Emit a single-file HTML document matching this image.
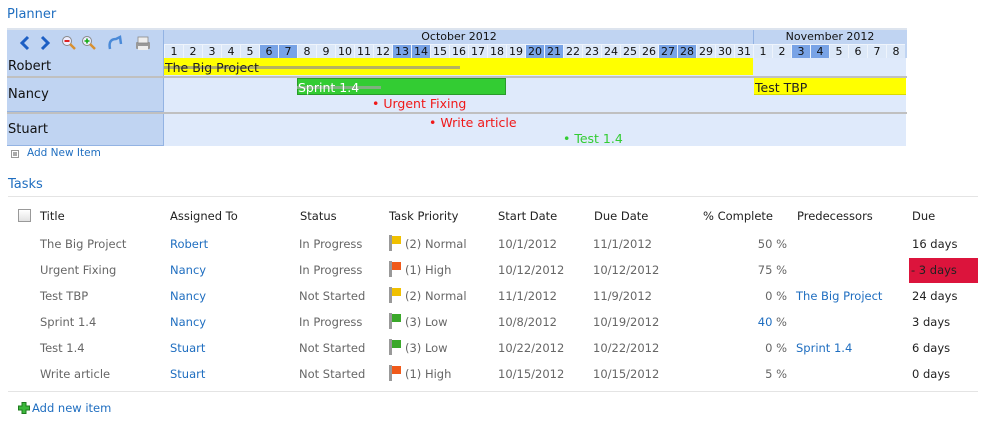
<!DOCTYPE html>
<html><head><meta charset="utf-8"><style>
*{margin:0;padding:0;box-sizing:border-box}
body{width:992px;height:431px;background:#fff;font-family:"DejaVu Sans","Liberation Sans",sans-serif;position:relative;overflow:hidden}
.a{position:absolute;white-space:nowrap}
.h{color:#1f6ec0;font-size:13px}
.days{position:absolute;left:164px;top:44px;height:14px;display:flex}
.days div{width:19px;height:14px;border-left:1px solid #eef4fc;border-top:1px solid #eef4fc;background:#dce8f8;font-size:11px;text-align:center;line-height:13px;color:#111}
.days div.w{background:#78a3e6}
.t{font-size:11.5px;color:#666}
.l{color:#1f6ec0}
.k{color:#222}
.hd{font-size:11.5px;color:#222;top:209px}
</style></head><body>
<div class="a h" style="left:7px;top:7px">Planner</div>
<div class="a" style="left:7px;top:28px;width:900px;height:2px;background:#dde4ee"></div>
<div class="a" style="left:7px;top:30px;width:900px;height:28px;background:#c0d4f2"></div>
<div class="a" style="left:163px;top:30px;width:1px;height:116px;background:#93b3e3"></div>
<div class="a" style="left:753px;top:30px;width:1px;height:14px;background:#93b3e3"></div>
<div class="a" style="left:164px;top:30px;width:590px;height:14px;font-size:11px;text-align:center;color:#111;line-height:14px">October 2012</div>
<div class="a" style="left:754px;top:30px;width:152px;height:14px;font-size:11px;text-align:center;color:#111;line-height:14px">November 2012</div>
<div class="days">
<div>1</div><div>2</div><div>3</div><div>4</div><div>5</div><div class="w">6</div><div class="w">7</div><div>8</div><div>9</div><div>10</div><div>11</div><div>12</div><div class="w">13</div><div class="w">14</div><div>15</div><div>16</div><div>17</div><div>18</div><div>19</div><div class="w">20</div><div class="w">21</div><div>22</div><div>23</div><div>24</div><div>25</div><div>26</div><div class="w">27</div><div class="w">28</div><div>29</div><div>30</div><div>31</div>
<div>1</div><div>2</div><div class="w">3</div><div class="w">4</div><div>5</div><div>6</div><div>7</div><div>8</div>
</div>
<svg class="a" style="left:18px;top:34px" width="140" height="18" viewBox="0 0 140 18">
<path d="M10 3 L4 9 L10 15" stroke="#1d5fc4" stroke-width="3" fill="none"/>
<path d="M24 3 L30 9 L24 15" stroke="#1d5fc4" stroke-width="3" fill="none"/>
<circle cx="49" cy="7" r="4.5" fill="#eef" stroke="#888"/><rect x="46.5" y="6" width="5" height="2" fill="#d22"/><path d="M52 10 L57 15" stroke="#d89030" stroke-width="2.5"/>
<circle cx="69" cy="7" r="4.5" fill="#eef" stroke="#888"/><path d="M66.5 7 H71.5 M69 4.5 V9.5" stroke="#1a1" stroke-width="1.6"/><path d="M72 10 L77 15" stroke="#d89030" stroke-width="2.5"/>
<path d="M92 15 Q90 5 98 5 L102 3 L103 10" stroke="#4a8ad8" stroke-width="2.5" fill="none"/>
<rect x="118" y="8" width="14" height="7" rx="1" fill="#999"/><rect x="120" y="3" width="10" height="6" fill="#eee" stroke="#888" stroke-width=".8"/><rect x="120" y="12" width="10" height="4" fill="#eee"/>
</svg>
<div class="a" style="left:7px;top:58px;width:156px;height:18px;background:#c0d4f2;font-size:13px;line-height:18px;padding-left:1px;color:#111">Robert</div>
<div class="a" style="left:164px;top:58px;width:742px;height:18px;background:#dfeafb"></div>
<div class="a" style="left:164px;top:58px;width:589px;height:17px;background:#ffff00"></div>
<div class="a" style="left:164px;top:66px;width:296px;height:3px;background:#b5b260"></div>
<div class="a" style="left:165px;top:59px;font-size:12.5px;color:#222;line-height:17px">The Big Project</div>
<div class="a" style="left:7px;top:76px;width:900px;height:2px;background:#c0c0c0"></div>
<div class="a" style="left:7px;top:78px;width:156px;height:34px;background:#c0d4f2;font-size:13px;line-height:34px;padding-left:1px;color:#111;border-bottom:1px solid #93b3e3">Nancy</div>
<div class="a" style="left:164px;top:78px;width:742px;height:34px;background:#dfeafb"></div>
<div class="a" style="left:297px;top:78px;width:209px;height:17px;background:#33cc33;border:1px solid #2a9a2a"></div>
<div class="a" style="left:297px;top:86px;width:84px;height:3px;background:#80b080"></div>
<div class="a" style="left:298px;top:79px;font-size:12.5px;color:#fff;line-height:17px">Sprint 1.4</div>
<div class="a" style="left:754px;top:78px;width:152px;height:17px;background:#ffff00;border-bottom:1px solid #dada00"></div>
<div class="a" style="left:755px;top:79px;font-size:12.5px;color:#222;line-height:17px">Test TBP</div>
<div class="a" style="left:372px;top:96px;font-size:12.5px;color:#f01818;line-height:16px">• Urgent Fixing</div>
<div class="a" style="left:7px;top:112px;width:900px;height:2px;background:#c0c0c0"></div>
<div class="a" style="left:7px;top:114px;width:156px;height:32px;background:#c0d4f2;font-size:13px;line-height:32px;padding-left:1px;color:#111;border-bottom:1px solid #93b3e3">Stuart</div>
<div class="a" style="left:164px;top:114px;width:742px;height:32px;background:#dfeafb"></div>
<div class="a" style="left:429px;top:115px;font-size:12.5px;color:#f01818;line-height:16px">• Write article</div>
<div class="a" style="left:563px;top:131px;font-size:12.5px;color:#33cc33;line-height:16px">• Test 1.4</div>
<div class="a" style="left:11px;top:150px;width:8px;height:8px;border:1px solid #999;background:#fff"><div style="margin:1px;width:4px;height:4px;background:#aaa"></div></div>
<div class="a l" style="left:27px;top:147px;font-size:10.5px">Add New Item</div>

<div class="a h" style="left:8px;top:177px">Tasks</div>
<div class="a" style="left:8px;top:196px;width:970px;height:1px;background:#e4e4e4"></div>
<div class="a" style="left:18px;top:209px;width:13px;height:13px;border:1px solid #999;background:linear-gradient(#fff,#e2e2e2)"></div>
<div class="a hd" style="left:40px">Title</div>
<div class="a hd" style="left:170px">Assigned To</div>
<div class="a hd" style="left:300px">Status</div>
<div class="a hd" style="left:389px">Task Priority</div>
<div class="a hd" style="left:498px">Start Date</div>
<div class="a hd" style="left:594px">Due Date</div>
<div class="a hd" style="left:703px">% Complete</div>
<div class="a hd" style="left:797px">Predecessors</div>
<div class="a hd" style="left:912px">Due</div>

<div class="a" style="left:909px;top:258px;width:69px;height:25px;background:#dc143c"></div>

<div class="a t" style="top:237px;left:40px">The Big Project</div><div class="a t l" style="top:237px;left:170px">Robert</div><div class="a t" style="top:237px;left:299px">In Progress</div><svg class="a" style="top:235px;left:389px" width="13" height="16"><rect x="0" y="0" width="3" height="16" fill="#999"/><path d="M3 1 H12 V9 H3 Z" fill="#f0c000"/></svg><div class="a t" style="top:237px;left:405px">(2) Normal</div><div class="a t" style="top:237px;left:498px">10/1/2012</div><div class="a t" style="top:237px;left:593px">11/1/2012</div><div class="a t" style="top:237px;left:700px;width:87px;text-align:right">50 %</div><div class="a k" style="font-size:11.5px;top:237px;left:912px">16 days</div>

<div class="a t" style="top:263px;left:40px">Urgent Fixing</div><div class="a t l" style="top:263px;left:170px">Nancy</div><div class="a t" style="top:263px;left:299px">In Progress</div><svg class="a" style="top:261px;left:389px" width="13" height="16"><rect x="0" y="0" width="3" height="16" fill="#999"/><path d="M3 1 H12 V9 H3 Z" fill="#f05a1a"/></svg><div class="a t" style="top:263px;left:405px">(1) High</div><div class="a t" style="top:263px;left:498px">10/12/2012</div><div class="a t" style="top:263px;left:593px">10/12/2012</div><div class="a t" style="top:263px;left:700px;width:87px;text-align:right">75 %</div><div class="a k" style="font-size:11.5px;top:263px;left:911px">- 3 days</div>

<div class="a t" style="top:289px;left:40px">Test TBP</div><div class="a t l" style="top:289px;left:170px">Nancy</div><div class="a t" style="top:289px;left:299px">Not Started</div><svg class="a" style="top:287px;left:389px" width="13" height="16"><rect x="0" y="0" width="3" height="16" fill="#999"/><path d="M3 1 H12 V9 H3 Z" fill="#f0c000"/></svg><div class="a t" style="top:289px;left:405px">(2) Normal</div><div class="a t" style="top:289px;left:498px">11/1/2012</div><div class="a t" style="top:289px;left:593px">11/9/2012</div><div class="a t" style="top:289px;left:700px;width:87px;text-align:right">0 %</div><div class="a t l" style="top:289px;left:796px">The Big Project</div><div class="a k" style="font-size:11.5px;top:289px;left:912px">24 days</div>

<div class="a t" style="top:315px;left:40px">Sprint 1.4</div><div class="a t l" style="top:315px;left:170px">Nancy</div><div class="a t" style="top:315px;left:299px">In Progress</div><svg class="a" style="top:313px;left:389px" width="13" height="16"><rect x="0" y="0" width="3" height="16" fill="#999"/><path d="M3 1 H12 V9 H3 Z" fill="#3aa82a"/></svg><div class="a t" style="top:315px;left:405px">(3) Low</div><div class="a t" style="top:315px;left:498px">10/8/2012</div><div class="a t" style="top:315px;left:593px">10/19/2012</div><div class="a t" style="top:315px;left:700px;width:87px;text-align:right"><span class="l">40</span> %</div><div class="a k" style="font-size:11.5px;top:315px;left:912px">3 days</div>

<div class="a t" style="top:341px;left:40px">Test 1.4</div><div class="a t l" style="top:341px;left:170px">Stuart</div><div class="a t" style="top:341px;left:299px">Not Started</div><svg class="a" style="top:339px;left:389px" width="13" height="16"><rect x="0" y="0" width="3" height="16" fill="#999"/><path d="M3 1 H12 V9 H3 Z" fill="#3aa82a"/></svg><div class="a t" style="top:341px;left:405px">(3) Low</div><div class="a t" style="top:341px;left:498px">10/22/2012</div><div class="a t" style="top:341px;left:593px">10/22/2012</div><div class="a t" style="top:341px;left:700px;width:87px;text-align:right">0 %</div><div class="a t l" style="top:341px;left:796px">Sprint 1.4</div><div class="a k" style="font-size:11.5px;top:341px;left:912px">6 days</div>

<div class="a t" style="top:367px;left:40px">Write article</div><div class="a t l" style="top:367px;left:170px">Stuart</div><div class="a t" style="top:367px;left:299px">Not Started</div><svg class="a" style="top:365px;left:389px" width="13" height="16"><rect x="0" y="0" width="3" height="16" fill="#999"/><path d="M3 1 H12 V9 H3 Z" fill="#f05a1a"/></svg><div class="a t" style="top:367px;left:405px">(1) High</div><div class="a t" style="top:367px;left:498px">10/15/2012</div><div class="a t" style="top:367px;left:593px">10/15/2012</div><div class="a t" style="top:367px;left:700px;width:87px;text-align:right">5 %</div><div class="a k" style="font-size:11.5px;top:367px;left:912px">0 days</div>

<div class="a" style="left:8px;top:391px;width:970px;height:1px;background:#e4e4e4"></div>
<svg class="a" style="left:18px;top:402px" width="12" height="12"><path d="M4 0.5 H8 V4 H11.5 V8 H8 V11.5 H4 V8 H0.5 V4 H4 Z" fill="#3cb83c" stroke="#1e7a1e"/></svg>
<div class="a l" style="left:32px;top:401px;font-size:11.5px">Add new item</div>
</body></html>
